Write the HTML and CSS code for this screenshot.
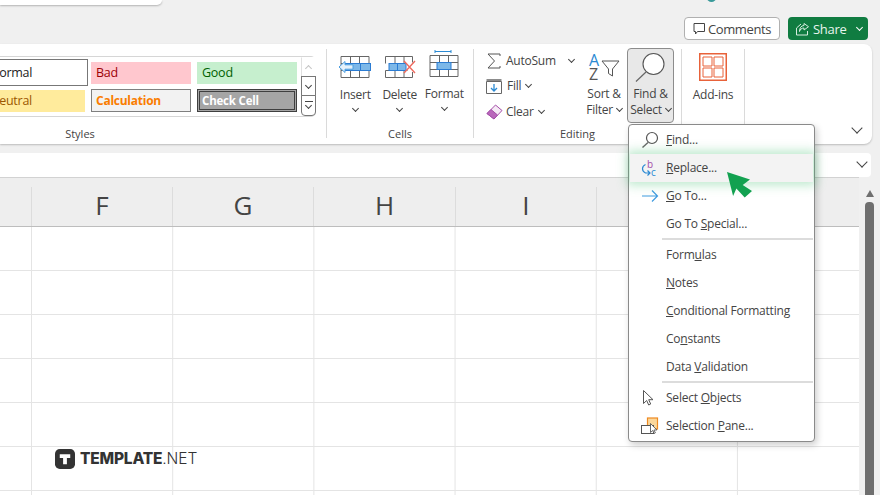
FILE: index.html
```html
<!DOCTYPE html>
<html lang="en">
<head>
<meta charset="utf-8">
<title>Excel Find and Select</title>
<link rel="stylesheet" href="styles.css">
</head>
<body>
<div class="app">
  <header class="topbar">
    <div class="doc-tab"></div>
    <div class="avatar-hint"></div>
    <div class="top-actions">
      <button class="btn-comments">
        <svg class="i-comment" viewBox="0 0 14 14"><path d="M1 1.500h10.500v8H4.500l-2 2.500v-2.500H1z" fill="none" stroke="#444" stroke-width="1"/></svg>
        Comments
      </button>
      <button class="btn-share">
        <svg class="i-share" viewBox="0 0 16 16"><path d="M6 3 L1.500 7v7h11v-4M9 2.500l4.500 3.200L9 9V7C6.500 7 5 8.500 4.500 10.500 4.500 7 6 4.700 9 4.500z" fill="none" stroke="#d6ecdf" stroke-width="1"/></svg>
        <span class="share-label">Share</span>
        <span class="chev chev-white"></span>
      </button>
    </div>
  </header>

  <section class="ribbon">
    <div class="group group-styles">
      <div class="group-body">
        <div class="gallery">
          <div class="style-grid">
            <div class="cs cs-normal">Normal</div>
            <div class="cs cs-bad">Bad</div>
            <div class="cs cs-good">Good</div>
            <div class="cs cs-neutral">Neutral</div>
            <div class="cs cs-calc">Calculation</div>
            <div class="cs cs-check">Check Cell</div>
          </div>
          <div class="gal-scroll">
            <div class="gal-btn gal-off"><span class="chev chev-up"></span></div>
            <div class="gal-btn"><span class="chev"></span></div>
            <div class="gal-btn gal-more"><span class="bar"></span><span class="chev"></span></div>
          </div>
        </div>
      </div>
      <div class="group-label">Styles</div>
    </div>
    <div class="sep"></div>

    <div class="group group-cells">
      <div class="group-body tools">
        <div class="tool">
          <svg class="t-icon" width="34" height="26" viewBox="0 0 34 26">
            <path d="M3 3.500h28v21H3zM3 10.500h28M3 17.500h28M12.500 3.500v21M21.500 3.500v21" fill="#fff" stroke="#666"/>
            <rect x="6" y="10.500" width="26.500" height="7" fill="#7db8e8" stroke="#2b7cd3"/>
            <path d="M22.500 10.500v7" stroke="#2b7cd3"/>
            <path d="M1 14l6-5.500v3.300h8v4.400H7v3.300z" fill="#e6f2fb" stroke="#4a9ee0"/>
          </svg>
          <div class="t-label">Insert</div>
          <span class="chev"></span>
        </div>
        <div class="tool">
          <svg class="t-icon" width="34" height="26" viewBox="0 0 34 26">
            <path d="M2.500 3.500h27M2.500 24.500h27M2.500 17.500h22M2.500 3.500v7M2.500 17.500v7M29.500 3.500v6M29.500 19v5.500M12 3.500v7M21 3.500v7M12 17.500v7M21 17.500v7" fill="none" stroke="#666"/>
            <rect x="6" y="10.500" width="17" height="7" fill="#7db8e8" stroke="#2b7cd3"/>
            <path d="M14.500 10.500v7" stroke="#2b7cd3"/>
            <path d="M21 8l11 12M32 8L21 20" stroke="#ee6b5f" stroke-width="1.400" fill="none"/>
          </svg>
          <div class="t-label">Delete</div>
          <span class="chev"></span>
        </div>
        <div class="tool tool-format">
          <svg class="t-icon" width="34" height="27" viewBox="0 0 34 27">
            <path d="M8 1.500h16M8 0v3M24 0v3" stroke="#2b8ad3" fill="none"/>
            <path d="M3 5.500h28v21H3zM3 12.500h28M3 19.500h28M12.500 5.500v21M21.500 5.500v21" fill="#fff" stroke="#666"/>
            <rect x="10" y="12.500" width="14" height="7" fill="#7db8e8" stroke="#2b7cd3"/>
          </svg>
          <div class="t-label">Format</div>
          <span class="chev"></span>
        </div>
      </div>
      <div class="group-label">Cells</div>
    </div>
    <div class="sep"></div>

    <div class="group group-editing">
      <div class="group-body tools">
        <div class="edit-list">
          <div class="edit-row">
            <svg class="e-icon" width="16" height="16" viewBox="0 0 16 16"><path d="M14 3V1H2l6.500 7L2 15h12v-2" fill="none" stroke="#555" stroke-width="1"/></svg>
            <span>AutoSum</span><span class="chev chev-far"></span>
          </div>
          <div class="edit-row">
            <svg class="e-icon" width="16" height="15" viewBox="0 0 16 15"><path d="M.5 2.500h15v12H.5z" fill="#fff" stroke="#666"/><path d="M.5 1h15" stroke="#666" stroke-width="1.500"/><path d="M8 5v7M5 9l3 3 3-3" fill="none" stroke="#2b8ad3" stroke-width="1.300"/></svg>
            <span>Fill</span><span class="chev"></span>
          </div>
          <div class="edit-row">
            <svg class="e-icon" width="17" height="16" viewBox="0 0 17 16"><path d="M1 9.500L9.500 1 16 6.500 8 15z" fill="#f5e9f5" stroke="#a44ea8"/><path d="M1 9.500L5 5.500l6.500 5.500L8 15z" fill="#b967bb" stroke="#a44ea8"/></svg>
            <span>Clear</span><span class="chev"></span>
          </div>
        </div>
        <div class="tool tool-sort">
          <svg class="t-icon" width="34" height="30" viewBox="0 0 34 30">
            <text x="2" y="14" class="svg-a">A</text>
            <text x="2" y="28" class="svg-z">Z</text>
            <path d="M15 9h17l-6.500 8v7l-4-2.500V17z" fill="#fff" stroke="#555"/>
          </svg>
          <div class="t-label">Sort &amp;</div>
          <div class="t-label">Filter <span class="chev"></span></div>
        </div>
        <div class="tool tool-find">
          <svg class="t-icon" width="32" height="32" viewBox="0 0 32 32">
            <circle cx="18.500" cy="12" r="10.500" fill="#fff" stroke="#555" stroke-width="1.100"/>
            <path d="M11 20L1 29.500" stroke="#666" stroke-width="1.200"/>
          </svg>
          <div class="t-label">Find &amp;</div>
          <div class="t-label">Select <span class="chev"></span></div>
        </div>
      </div>
      <div class="group-label">Editing</div>
    </div>
    <div class="sep"></div>

    <div class="group group-addins">
      <div class="group-body tools">
        <div class="tool tool-addins">
          <svg class="t-icon" width="28" height="28" viewBox="0 0 28 28">
            <path d="M.75.750h26.500v26.500H.75z" fill="none" stroke="#e8623a" stroke-width="1.500"/>
            <path d="M4 4h9v9H4zM15 4h9v9h-9zM4 15h9v9H4zM15 15h9v9h-9z" fill="none" stroke="#e8623a"/>
          </svg>
          <div class="t-label">Add-ins</div>
        </div>
      </div>
    </div>
    <div class="sep"></div>
    <div class="ribbon-end"><span class="chev chev-big"></span></div>
  </section>

  <div class="formula-bar"><span class="chev chev-big"></span></div>

  <section class="sheet">
    <div class="sheet-main">
      <div class="col-heads">
        <div class="col col-part"></div>
        <div class="col">F</div>
        <div class="col">G</div>
        <div class="col col-wide">H</div>
        <div class="col">I</div>
        <div class="col">J</div>
        <div class="col col-last">K</div>
      </div>
      <div class="cells"></div>
    </div>
    <div class="scrollbar">
      <div class="sb-up"></div>
      <div class="sb-thumb"></div>
    </div>
  </section>
</div>

<div class="brand">
  <svg class="brand-mark" width="20" height="20" viewBox="0 0 21 21"><rect width="21" height="21" rx="5" fill="#333"/><path d="M5 5.500h11v4h-3.500V16h-4V9.500H5z" fill="#fff"/></svg>
  <span class="brand-name">TEMPLATE</span><span class="brand-net">.NET</span>
</div>

<nav class="menu">
  <div class="m-item">
    <svg class="m-icon" width="18" height="18" viewBox="0 0 18 18"><circle cx="11" cy="7" r="5.500" fill="none" stroke="#555" stroke-width="1.200"/><path d="M7 11.500L1.500 16.500" stroke="#666" stroke-width="1.400"/></svg>
    <span><u>F</u>ind...</span>
  </div>
  <div class="m-item m-hot">
    <svg class="m-icon" width="18" height="18" viewBox="0 0 18 18"><text x="6" y="8.500" class="svg-b">b</text><text x="10" y="16.500" class="svg-c">c</text><path d="M4.500 5.500C.5 7.500.5 12 4.500 14H9M6.500 11.500L9 14l-2.500 2.500" fill="none" stroke="#2b8ad3" stroke-width="1.200"/></svg>
    <span><u>R</u>eplace...</span>
  </div>
  <div class="m-item">
    <svg class="m-icon" width="18" height="18" viewBox="0 0 18 18"><path d="M1 9h15M11 3.500L16.500 9 11 14.500" fill="none" stroke="#3f9be0" stroke-width="1.200"/></svg>
    <span><u>G</u>o To...</span>
  </div>
  <div class="m-item"><span class="m-gap"></span><span>Go To <u>S</u>pecial...</span></div>
  <div class="m-sep"></div>
  <div class="m-item"><span class="m-gap"></span><span>Form<u>u</u>las</span></div>
  <div class="m-item"><span class="m-gap"></span><span><u>N</u>otes</span></div>
  <div class="m-item"><span class="m-gap"></span><span><u>C</u>onditional Formatting</span></div>
  <div class="m-item"><span class="m-gap"></span><span>Co<u>n</u>stants</span></div>
  <div class="m-item"><span class="m-gap"></span><span>Data <u>V</u>alidation</span></div>
  <div class="m-sep"></div>
  <div class="m-item">
    <svg class="m-icon" width="18" height="18" viewBox="0 0 18 18"><path d="M2.500 1.500v13l3.200-3 2 4.500 2-1-2-4.300h4.300z" fill="#fff" stroke="#555"/></svg>
    <span>Select <u>O</u>bjects</span>
  </div>
  <div class="m-item">
    <svg class="m-icon" width="18" height="18" viewBox="0 0 18 18"><rect x="6.500" y="1" width="10" height="11" fill="#fbd79b" stroke="#ee8a22" stroke-width="1.200"/><rect x=".5" y="8.500" width="12" height="8" fill="#fff" stroke="#555"/><path d="M9.500 6.500v9l2.200-2 1.500 3 1.200-.7-1.500-2.800h3z" fill="#fff" stroke="#444" stroke-width=".8"/></svg>
    <span>Selection <u>P</u>ane...</span>
  </div>
</nav>

<svg class="pointer" width="28" height="28" viewBox="0 0 28 28"><path d="M1 1l23 7.500-7.300 5.500 9.300 6-7.300 6.500-8.300-9-3.300 7.500z" fill="#12a150"/></svg>
</body>
</html>
```

FILE: styles.css
```css
* { box-sizing: border-box; }
html, body { margin: 0; padding: 0; }
body {
  width: 880px; height: 495px; overflow: hidden; position: relative;
  background: #f0f0f0; color: #444;
  font: 12px/16px "Open Sans", "Noto Sans", sans-serif;
  letter-spacing: -.25px;
}
.app { display: flex; flex-direction: column; height: 495px; }

.chev {
  display: inline-block; width: 5px; height: 5px; margin: 0 2px 3px;
  border-right: 1.2px solid #444; border-bottom: 1.2px solid #444;
  transform: rotate(45deg);
}
.chev-up { transform: rotate(225deg); margin: 3px 0 0; border-color: #c4c4c4; }
.chev-white { border-color: #fff; }
.chev-big { width: 8px; height: 8px; border-width: 1.4px; }

/* top bar */
.topbar { height: 44px; flex: none; display: flex; justify-content: flex-end; position: relative; }
.doc-tab {
  position: absolute; left: 0; top: 0; width: 162px; height: 5px; background: #fff;
  border-radius: 0 0 5px 0; box-shadow: 0 1px 2px rgba(0,0,0,.25);
}
.avatar-hint {
  position: absolute; left: 707px; top: -6px; width: 9px; height: 8px;
  border-radius: 50%; background: #3a9a9a;
}
.top-actions { display: flex; gap: 8px; margin: 17px 12px 0 0; height: 23px; }
.btn-comments, .btn-share {
  display: flex; align-items: center; height: 23px; padding: 0; border-radius: 4px;
  font: 13px/16px "Open Sans", sans-serif;
}
.btn-comments { width: 96px; background: #fff; border: 1px solid #b0b0b0; color: #444; padding-left: 8px; gap: 1px; letter-spacing: -.4px; }
.i-comment { width: 14px; height: 14px; flex: none; }
.btn-share { width: 80px; background: #107c41; border: 0; color: #e8f5ee; padding-left: 7px; letter-spacing: -.3px; }
.i-share { width: 16px; height: 16px; flex: none; }
.share-label { margin-left: 2px; width: 39px; text-align: left; }
.btn-share .chev { margin-left: 5px; }

/* ribbon */
.ribbon {
  flex: none; height: 100px; width: 872px; display: flex; background: #fff;
  border-radius: 0 8px 8px 0; box-shadow: 0 1px 2px rgba(0,0,0,.22);
}
.sep { flex: none; width: 1px; margin: 5px 0 6px; background: #dadada; }
.group { flex: none; display: flex; flex-direction: column; }
.group-body { height: 82px; padding-top: 4px; }
.group-label { height: 16px; text-align: center; font-size: 11px; line-height: 16px; color: #444; letter-spacing: 0; }
.group-styles { width: 326px; }
.group-cells { width: 146px; }
.group-editing { width: 207px; }
.group-addins { width: 62px; }
.ribbon-end { flex: 1; display: flex; justify-content: flex-end; align-items: flex-end; padding: 0 9px 9px 0; }

.group-styles .group-body { display: flex; justify-content: flex-end; padding: 12px 10px 0 0; }
.group-styles .group-label { width: 160px; }
.gallery {
  flex: none; width: 332px; height: 61px; display: flex; border: 1px solid #d6d6d6; border-radius: 5px;
}
.style-grid {
  display: grid; grid-template-columns: 100px 100px 100px; grid-template-rows: 27px 27px;
  column-gap: 6px; row-gap: 1px; padding: 2px 0 0 0; flex: none; width: 316px;
  justify-content: start;
}
.cs {
  display: flex; align-items: center; padding-left: 5px; font: 12.5px/16px "Open Sans", sans-serif;
}
.cs-normal { width: 103px; background: #fff; border: 1.500px solid #777; color: #222; padding-left: 4px; }
.cs-bad { height: 22px; margin-top: 3px; background: #ffc7ce; color: #9c0006; }
.cs-good { height: 22px; margin-top: 3px; background: #c6efce; color: #006100; }
.cs-neutral { height: 22px; margin-top: 3px; background: #ffeb9c; color: #9c5700; }
.cs-calc { height: 23px; margin-top: 2px; background: #f2f2f2; border: 1px solid #7f7f7f; color: #fa7d00; font-weight: 700; padding-left: 4px; letter-spacing: -.25px; font-size: 12px; }
.cs-check { height: 23px; margin-top: 2px; background: #a5a5a5; border: 3px double #3f3f3f; color: #fff; font-weight: 700; padding-left: 2px; font-size: 11.5px; letter-spacing: -.2px; }
.gal-scroll { flex: none; width: 15px; display: flex; flex-direction: column; margin-right: -1px; }
.gal-btn { height: 20px; display: flex; align-items: center; justify-content: center; flex-direction: column; background: #fff; border: 1px solid #777; margin-bottom: -1px; }
.gal-off { border-color: transparent; border-left-color: #e0e0e0; }
.gal-more { height: 21px; border-radius: 0 0 4px 4px; }
.bar { width: 8px; height: 1px; background: #444; margin-bottom: 1px; }
.gal-btn .chev { margin-bottom: 2px; }
.gal-off .chev { margin-bottom: 0; }

/* tools */
.tools { display: flex; }
.group-cells .tools { padding-left: 6px; }
.tool { display: flex; flex-direction: column; align-items: center; padding-top: 5px; }
.t-icon { display: block; flex: none; }
.t-label { height: 16px; line-height: 16px; white-space: nowrap; }
.t-label .chev { margin: 0 0 3px 1px; }
.group-cells .tool { width: 44.5px; }
.group-cells .t-icon { margin-bottom: 8px; }
.group-cells .t-label + .chev { margin-top: 3px; }
.tool-format { margin-top: -3px; }
.group-cells .tool-format .t-icon { margin-bottom: 9px; }

.edit-list { width: 107px; padding-left: 12px; flex: none; }
.edit-row { height: 26px; display: flex; align-items: center; white-space: nowrap; }
.edit-row:first-child { height: 25px; }
.e-icon { flex: none; margin-right: 4px; }
.edit-row .chev { margin-left: 5px; margin-right: 0; }
.edit-row .chev-far { margin-left: 13px; }
.edit-row:nth-child(2) .e-icon { margin-right: 5px; }
.edit-row:nth-child(3) .e-icon { margin-right: 3px; }

.tool-sort { width: 46px; padding-top: 4px; }
.tool-sort .t-icon { margin-bottom: 4px; }
.tool-find {
  width: 47px; height: 75px; padding-top: 3px; background: #e8e8e8;
  border: 1px solid #8c8c8c; border-radius: 4px;
}
.tool-find .t-icon { margin-bottom: 2px; }
.tool-addins { width: 62px; padding-top: 5px; }
.tool-addins .t-icon { margin-bottom: 6px; }
.svg-a { font: 16px "Open Sans", sans-serif; fill: #2b8ad3; }
.svg-z { font: 16px "Open Sans", sans-serif; fill: #555; }
.svg-b { font: 10px "Open Sans", sans-serif; fill: #a44ea8; }
.svg-c { font: 10px "Open Sans", sans-serif; fill: #2b8ad3; }

/* formula bar */
.formula-bar {
  flex: none; width: 871px; height: 24px; margin-top: 9px; background: #fff; border-radius: 0 4px 4px 0;
  display: flex; justify-content: flex-end; align-items: center; padding: 0 3px 4px 0;
}

/* sheet */
.sheet { flex: 1; display: flex; min-height: 0; }
.sheet-main { width: 859px; flex: none; display: flex; flex-direction: column; }
.col-heads {
  flex: none; height: 50px; display: flex; align-items: flex-end; background: #eeeeee;
  border-top: 1px solid #d2d2d2; border-bottom: 1.500px solid #bdbdbd;
}
.col {
  flex: none; width: 141px; height: 39px; border-right: 1px solid #dcdcdc; text-align: center;
  font: 26px/36px "Open Sans", sans-serif; color: #444; letter-spacing: 0;
}
.col-part { width: 32px; }
.col-wide { width: 142px; }
.col-last { flex: 1; border-right: 0; }
.cells {
  flex: 1; background-color: #fff;
  background-image: linear-gradient(to right, #e4e4e4 1.300px, transparent 1.300px), linear-gradient(to bottom, #e4e4e4 1.300px, transparent 1.300px);
  background-size: 141.200px 100%, 100% 44px;
  background-position: 31px 0, 0 43px;
}
.scrollbar { flex: 1; background: #f0f0f0; display: flex; flex-direction: column; align-items: center; padding: 13px 0 0 0; }
.sb-up {
  width: 0; height: 0; border: 4.500px solid transparent; border-top: 0; border-bottom: 7px solid #6f6f6f;
}
.sb-thumb { width: 8.500px; flex: 1; margin-top: 5px; background: #6f6f6f; border-radius: 4px 4px 0 0; }

/* menu */
.menu {
  position: absolute; left: 628px; top: 124px; width: 187px; height: 318px; padding: 1px 1px;
  background: #fff; border: 1px solid #8a8a8a; border-radius: 4px;
  box-shadow: 2px 3px 7px rgba(0,0,0,.2);
}
.m-item { height: 28px; display: flex; align-items: center; color: #444; white-space: nowrap; letter-spacing: -.22px; }
.m-icon { flex: none; margin: 0 7px 0 11px; }
.m-gap { flex: none; width: 36px; }
.m-hot {
  background: #f3f3f3; box-shadow: 0 0 10px 3px rgba(60,190,110,.35);
  position: relative;
}
.m-sep { height: 2px; margin: 0 0 1px 32px; background: #dcdcdc; }

.pointer { position: absolute; left: 726px; top: 171px; }

/* brand */
.brand { position: absolute; left: 55px; top: 449px; display: flex; align-items: center; height: 20px; color: #333; }
.brand-mark { margin-right: 5px; flex: none; }
.brand-name { font: 800 15.500px/20px Inter, sans-serif; letter-spacing: -.2px; }
.brand-net { font: 300 15.500px/20px Inter, sans-serif; letter-spacing: -.1px; }
```
